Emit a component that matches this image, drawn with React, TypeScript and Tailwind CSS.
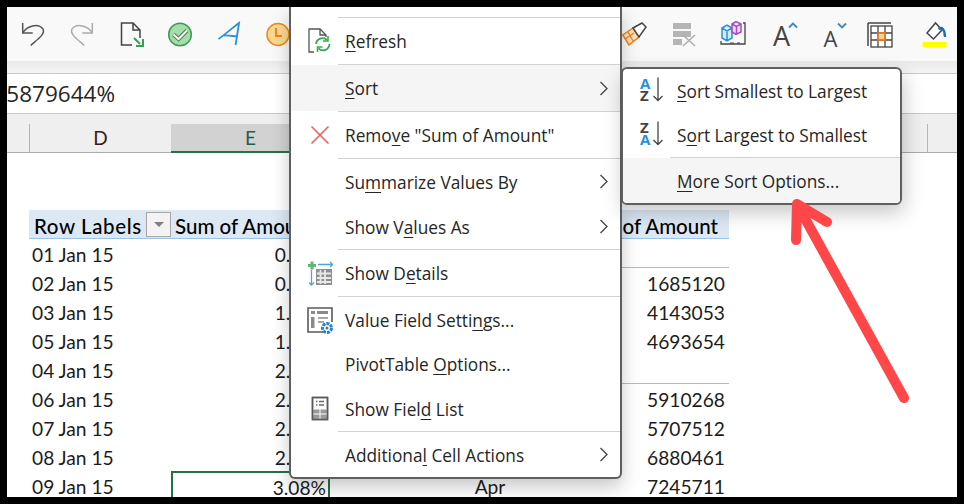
import type { ReactNode } from 'react';

const MENU_FONT = 'font-["Open_Sans","Noto_Sans",sans-serif]';

type PivotRow = { label: string; share: string; month?: string; amount?: string; subtotal?: boolean };

const PIVOT_ROWS: PivotRow[] = [
  { label: '01 Jan 15', share: '0.77%', subtotal: true },
  { label: '02 Jan 15', share: '0.89%', amount: '1685120' },
  { label: '03 Jan 15', share: '1.22%', amount: '4143053' },
  { label: '05 Jan 15', share: '1.64%', amount: '4693654' },
  { label: '04 Jan 15', share: '2.05%', subtotal: true },
  { label: '06 Jan 15', share: '2.31%', amount: '5910268' },
  { label: '07 Jan 15', share: '2.47%', amount: '5707512' },
  { label: '08 Jan 15', share: '2.86%', amount: '6880461' },
  { label: '09 Jan 15', share: '3.08%', month: 'Apr', amount: '7245711' },
];

function Slot({ children }: { children: ReactNode }) {
  return <div className="flex h-[54px] w-[49px] shrink-0 items-center justify-center">{children}</div>;
}

function Icon({ children, size = 30 }: { children: ReactNode; size?: number }) {
  return (
    <svg width={size} height={size} viewBox={`0 0 ${size} ${size}`} fill="none" className="block">
      {children}
    </svg>
  );
}

function UndoIcon() {
  return (
    <Icon>
      <path d="M4.700 4v10h10" stroke="#555" strokeWidth="1.500" />
      <path d="M4.700 13.800C9 7 20 3.500 25 10c2.500 5-5 10-12.300 16.500" stroke="#555" strokeWidth="1.500" />
    </Icon>
  );
}

function RedoIcon() {
  return (
    <Icon>
      <path d="M25.300 4v10h-10" stroke="#ababab" strokeWidth="1.500" />
      <path d="M25.300 13.800C21 7 10 3.500 5 10c-2.500 5 5 10 12.300 16.500" stroke="#ababab" strokeWidth="1.500" />
    </Icon>
  );
}

function ExportDocIcon() {
  return (
    <Icon>
      <path d="M16 26H5.500V4H17l7 7v8M17 4v7h7" stroke="#444" strokeWidth="1.500" />
      <path d="M18 19l6 6" stroke="#2ea44f" strokeWidth="2" />
      <path d="M27 20v7h-7" stroke="#2ea44f" strokeWidth="2" />
    </Icon>
  );
}

function CheckCircleIcon() {
  return (
    <Icon>
      <circle cx="15" cy="15.500" r="11.300" fill="#a4dcaa" stroke="#3f9c50" strokeWidth="1.500" />
      <path d="M8.500 15.500l5 4.500 8.500-8.500" stroke="#3d7f4c" strokeWidth="4" />
      <path d="M8.500 15.500l5 4.500 8.500-8.500" stroke="#fff" strokeWidth="2" />
    </Icon>
  );
}

function ScriptAIcon() {
  return (
    <Icon>
      <path d="M4.500 20C12 15 18 9 25 4c-1 7-2 14-3.500 22M10 16.500c3-.5 8 .5 13 1" stroke="#2b90d9" strokeWidth="1.800" />
    </Icon>
  );
}

function ClockIcon() {
  return (
    <Icon>
      <circle cx="15" cy="15.500" r="11" fill="#fbd88f" stroke="#e98a1c" strokeWidth="1.500" />
      <path d="M13 9v8h6" stroke="#e98a1c" strokeWidth="2" />
    </Icon>
  );
}

function BrushIcon() {
  return (
    <Icon>
      <path d="M2.700 16L13 9l6 9-10 8z" fill="#fde0ba" stroke="#e8811a" strokeWidth="1.500" />
      <path d="M8 13l5 9M5 20l9-6" stroke="#e8811a" strokeWidth="1.200" />
      <path d="M13 9l9-5 4 4-7 10z" fill="#fff" stroke="#444" strokeWidth="1.500" />
    </Icon>
  );
}

function RemoveRowsIcon() {
  return (
    <Icon>
      <rect x="4" y="4" width="18" height="6" fill="#b5b5b5" />
      <rect x="4" y="12" width="18" height="6" fill="#b5b5b5" />
      <rect x="4" y="20" width="9" height="6" fill="#b5b5b5" />
      <path d="M14 16l12 11M26 16L14 27" stroke="#adadad" strokeWidth="1.500" />
    </Icon>
  );
}

function CubesIcon() {
  return (
    <Icon>
      <path d="M25 4h2v21H3v-3" stroke="#444" strokeWidth="1.300" />
      <path d="M4 9l5-3 5 3v10l-5 3-5-3zM4 9l5 3 5-3M9 12v10" fill="#d7ecfa" stroke="#2b90d9" strokeWidth="1.500" />
      <path d="M14 5l4-2.500L23 5v8l-5 2.500-4-2.500zM14 5l4.500 2.500L23 5M18.500 7.500v8" fill="#efd8f3" stroke="#a94bc0" strokeWidth="1.500" />
      <path d="M12 24h4M19 24h3" stroke="#444" strokeWidth="1" />
    </Icon>
  );
}

function FontSizeButton({ large }: { large: boolean }) {
  return (
    <div className="relative flex h-[30px] w-[30px] items-end justify-center">
      <span className={`font-['Open_Sans',sans-serif] leading-none text-[#444] ${large ? 'text-[27px]' : 'text-[22px]'}`}>A</span>
      <svg width="10" height="7" viewBox="0 0 10 7" fill="none" className="absolute -right-[1px] top-[3px]">
        <path d={large ? 'M1 5.500l4-4 4 4' : 'M1 1.500l4 4 4-4'} stroke="#3d87c4" strokeWidth="1.800" />
      </svg>
    </div>
  );
}

function CellGridIcon() {
  return (
    <Icon>
      <path d="M3 4h23M3 4v23" stroke="#444" strokeWidth="1.500" />
      <rect x="6" y="7" width="21" height="21" fill="#fff" stroke="#444" strokeWidth="1.300" />
      <path d="M13 7v21M20 7v21M6 14h21M6 21h21" stroke="#444" strokeWidth="1.300" />
      <rect x="13" y="14" width="7" height="7" fill="#fbd49b" stroke="#e8791a" strokeWidth="1.800" />
    </Icon>
  );
}

function FillColorIcon() {
  return (
    <Icon>
      <path d="M9 14l8.500-10 6.500 7-8.500 9z" fill="#fff" stroke="#444" strokeWidth="1.500" />
      <path d="M20.500 10c3-2 6-1 6.500 8" stroke="#1f6fb5" strokeWidth="2.500" />
      <rect x="4.500" y="23" width="24" height="5" fill="#ffff00" />
    </Icon>
  );
}

function RefreshDocIcon() {
  return (
    <Icon>
      <path d="M9 26H4V3h11l6 6v2M15 3v6h6" stroke="#555" strokeWidth="1.300" />
      <path d="M11 18a6.500 6.500 0 0 1 11-4M24.500 18a6.500 6.500 0 0 1-11 4.500" stroke="#36a84f" strokeWidth="1.800" />
      <path d="M23 10v5h-5M12.500 26v-5h5" stroke="#36a84f" strokeWidth="1.500" />
    </Icon>
  );
}

function RemoveIcon() {
  return (
    <Icon>
      <path d="M6.500 6.500l17 17M23.500 6.500l-17 17" stroke="#e8605f" strokeWidth="1.600" />
    </Icon>
  );
}

function ShowDetailsIcon() {
  return (
    <Icon>
      <path d="M3 7.500h8M7 3.500v8" stroke="#63b27e" strokeWidth="3" />
      <path d="M13 6.500h14M25 4l2.500 2.500L25 9" stroke="#4fa3dc" strokeWidth="1.300" />
      <path d="M6.500 12v15M4 24.500L6.500 27 9 24.500" stroke="#4fa3dc" strokeWidth="1.300" />
      <rect x="11" y="11" width="16" height="16" fill="#8e8e8e" />
      <path d="M12 15.500h14M12 20h14M12 24h14M15.500 12v14M20 12v14" stroke="#e8e8e8" strokeWidth="1.800" />
    </Icon>
  );
}

function ValueSettingsIcon() {
  return (
    <Icon>
      <path d="M20 27H3V3h24v14" stroke="#5a5a5a" strokeWidth="1.600" />
      <rect x="6" y="6" width="4" height="3" fill="#8a8a8a" />
      <rect x="12" y="6" width="11" height="3" fill="#8a8a8a" />
      <rect x="6" y="12" width="3.500" height="11" fill="#8a8a8a" />
      <path d="M13 13h10M13 17h6" stroke="#8a8a8a" strokeWidth="1.500" />
      <circle cx="22" cy="23" r="4.500" fill="#fff" stroke="#2b7fc4" strokeWidth="3" strokeDasharray="3 1" />
      <circle cx="22" cy="23" r="1.500" fill="#2b7fc4" />
    </Icon>
  );
}

function FieldListIcon() {
  return (
    <Icon>
      <rect x="7.500" y="3.500" width="15" height="22" fill="#fff" stroke="#5a5a5a" strokeWidth="1.500" />
      <path d="M11 7.500h1.500M14 7.500h5M11 11h1.500M14 11h5" stroke="#6a6a6a" strokeWidth="1.300" />
      <rect x="8" y="15" width="14" height="10" fill="#9a9a9a" />
      <path d="M8 15h14M8 20h14M15 15v10" stroke="#fff" strokeWidth="1" />
      <rect x="7.500" y="3.500" width="15" height="22" stroke="#5a5a5a" strokeWidth="1.500" />
    </Icon>
  );
}

function SortIcon({ ascending }: { ascending: boolean }) {
  const top = ascending ? 'A' : 'Z';
  const bottom = ascending ? 'Z' : 'A';
  return (
    <Icon size={38}>
      <text x="8" y="16.500" fontFamily="Open Sans, sans-serif" fontWeight="700" fontSize="15" fill={ascending ? '#2b90d9' : '#444'}>
        {top}
      </text>
      <text x="8" y="29" fontFamily="Open Sans, sans-serif" fontWeight="700" fontSize="15" fill={ascending ? '#444' : '#2b90d9'}>
        {bottom}
      </text>
      <path d="M26 5.500v23M21.500 24l4.500 4.500 4.500-4.500" stroke="#444" strokeWidth="1.300" />
    </Icon>
  );
}

function Chevron() {
  return (
    <svg width="10" height="15" viewBox="0 0 10 15" fill="none" className="block">
      <path d="M1.500 1l6.500 6.500-6.500 6.500" stroke="#444" strokeWidth="1.300" />
    </svg>
  );
}

function Mnemonic({ children }: { children: ReactNode }) {
  return <u className="underline decoration-1 underline-offset-[3px]">{children}</u>;
}

function Separator({ inset = 47 }: { inset?: number }) {
  return <div className="h-px shrink-0 bg-[#d2d2d2]" style={{ marginLeft: inset }} />;
}

type MenuRowProps = {
  icon?: ReactNode;
  children: ReactNode;
  height: string;
  submenu?: boolean;
  active?: boolean;
  iconInset?: string;
};

function MenuRow({ icon, children, height, submenu, active, iconInset = 'pl-[11px]' }: MenuRowProps) {
  return (
    <div className={`flex shrink-0 items-center ${height} ${active ? 'bg-[#f5f5f5]' : ''}`}>
      <div className={`flex w-[47px] shrink-0 items-center justify-center ${iconInset}`}>{icon}</div>
      <div className="flex-1 whitespace-nowrap pl-[7px] pt-[2px] text-[17.300px] text-[#262626]">{children}</div>
      {submenu && (
        <div className="pr-[11px]">
          <Chevron />
        </div>
      )}
    </div>
  );
}

function Toolbar() {
  return (
    <div className="flex h-[54px] shrink-0 justify-between bg-[#f9f9f9] pl-[1.500px]">
      <div className="flex">
        <Slot><UndoIcon /></Slot>
        <Slot><RedoIcon /></Slot>
        <Slot><ExportDocIcon /></Slot>
        <Slot><CheckCircleIcon /></Slot>
        <Slot><ScriptAIcon /></Slot>
        <Slot><ClockIcon /></Slot>
      </div>
      <div className="flex">
        <Slot><BrushIcon /></Slot>
        <Slot><RemoveRowsIcon /></Slot>
        <Slot><CubesIcon /></Slot>
        <Slot><FontSizeButton large /></Slot>
        <Slot><FontSizeButton large={false} /></Slot>
        <Slot><CellGridIcon /></Slot>
        <div className="ml-[4px]">
          <Slot><FillColorIcon /></Slot>
        </div>
      </div>
    </div>
  );
}

function ColumnHeaders() {
  return (
    <div className="shrink-0 border-b border-[#ababab] bg-[#efefef] pt-[10px]">
      <div className="flex h-[28px] font-['Lato',sans-serif] text-[19px]">
        <div className="w-[22px] shrink-0" />
        <div className="flex w-[142px] shrink-0 items-center justify-center border-l border-[#b5b5b5] text-[#3a1a1a]">D</div>
        <div className="relative flex w-[159px] shrink-0 items-center justify-center bg-[#d2d2d2] text-[#1f5f4a]">
          E
          <div className="absolute inset-x-0 -bottom-px h-[2px] bg-[#217346]" />
        </div>
        <div className="flex-1" />
        <div className="w-[30px] shrink-0 border-l border-[#b5b5b5]" />
      </div>
    </div>
  );
}

function PivotTable() {
  return (
    <div className="ml-[22px] w-[700px] font-['Lato',sans-serif] text-[19.200px] text-[#1c1c1c]">
      <div className="flex h-[29px] items-center border-b border-[#9bc2e6] bg-[#dce9f5] pt-[4px] text-[20.500px] font-medium text-black">
        <div className="flex w-[142px] shrink-0 items-center justify-between pl-[5px]">
          <span className="whitespace-nowrap tracking-[0.6px]">Row Labels</span>
          <span className="-mt-[4px] flex h-[25px] w-[25px] shrink-0 items-center justify-center border border-[#a6a6a6] bg-[#f3f3f3]">
            <span className="h-0 w-0 border-x-[5px] border-t-[5px] border-x-transparent border-t-[#7f7f7f]" />
          </span>
        </div>
        <div className="w-[159px] shrink-0 whitespace-nowrap pl-[4px]">Sum of Amount</div>
        <div className="flex flex-1 justify-end whitespace-nowrap pr-[11px]">Sum of Amount</div>
      </div>
      {PIVOT_ROWS.map((row) => (
        <div key={row.label} className="flex h-[29px] items-center">
          <div className="w-[142px] shrink-0 pl-[3px] pt-[4px]">{row.label}</div>
          <div
            className={`flex h-full w-[159px] shrink-0 items-center justify-end pr-[2px] pt-[4px] ${
              row.month ? 'border-2 border-b-0 border-[#217346]' : ''
            }`}
          >
            {row.share}
          </div>
          <div className={`flex h-full w-[300px] shrink-0 items-center justify-center pl-[20px] pt-[4px] ${row.subtotal ? 'border-b border-[#9bc2e6]' : ''}`}>
            {row.month}
          </div>
          <div className={`flex h-full flex-1 items-center justify-end pr-[4px] pt-[4px] ${row.subtotal ? 'border-b border-[#9bc2e6]' : ''}`}>
            {row.amount}
          </div>
        </div>
      ))}
    </div>
  );
}

function ContextMenu() {
  return (
    <div
      className={`absolute left-[282px] top-0 flex w-[333px] flex-col rounded-b-md border-x-2 border-b-2 border-[#5f5f5f] bg-white shadow-[0_8px_18px_rgba(0,0,0,0.22)] ${MENU_FONT}`}
    >
      <div className="h-[10px] shrink-0" />
      <Separator />
      <MenuRow height="h-[46px]" icon={<RefreshDocIcon />}><Mnemonic>R</Mnemonic>efresh</MenuRow>
      <Separator />
      <MenuRow height="h-[46px]" submenu active><Mnemonic>S</Mnemonic>ort</MenuRow>
      <Separator />
      <MenuRow height="h-[46px]" icon={<RemoveIcon />}>Remo<Mnemonic>v</Mnemonic>e "Sum of Amount"</MenuRow>
      <Separator />
      <MenuRow height="h-[45px]" submenu>Su<Mnemonic>m</Mnemonic>marize Values By</MenuRow>
      <MenuRow height="h-[45px]" submenu>Show V<Mnemonic>a</Mnemonic>lues As</MenuRow>
      <Separator />
      <MenuRow height="h-[46px]" icon={<ShowDetailsIcon />}>Show D<Mnemonic>e</Mnemonic>tails</MenuRow>
      <Separator />
      <MenuRow height="h-[45px]" icon={<ValueSettingsIcon />}>Value Field Setti<Mnemonic>n</Mnemonic>gs...</MenuRow>
      <MenuRow height="h-[44px]">PivotTable <Mnemonic>O</Mnemonic>ptions...</MenuRow>
      <MenuRow height="h-[45px]" icon={<FieldListIcon />}>Show Fiel<Mnemonic>d</Mnemonic> List</MenuRow>
      <Separator />
      <MenuRow height="h-[45px]" submenu>Additiona<Mnemonic>l</Mnemonic> Cell Actions</MenuRow>
    </div>
  );
}

function SortSubmenu() {
  return (
    <div
      className={`absolute left-[614px] top-[60px] flex w-[281px] flex-col overflow-hidden rounded-md border-2 border-[#5f5f5f] bg-white shadow-[2px_8px_20px_rgba(0,0,0,0.22)] ${MENU_FONT}`}
    >
      <MenuRow height="h-[43px]" iconInset="pl-[9px]" icon={<SortIcon ascending />}><Mnemonic>S</Mnemonic>ort Smallest to Largest</MenuRow>
      <MenuRow height="h-[45px]" iconInset="pl-[9px]" icon={<SortIcon ascending={false} />}>S<Mnemonic>o</Mnemonic>rt Largest to Smallest</MenuRow>
      <Separator />
      <MenuRow height="h-[45px]" active><Mnemonic>M</Mnemonic>ore Sort Options...</MenuRow>
    </div>
  );
}

function PointerArrow() {
  return (
    <svg width="130" height="215" viewBox="0 0 130 215" fill="none" className="absolute left-[782px] top-[188px]">
      <path d="M8 9L115 203M8 9l-1 36M8 9l30 18" stroke="#ff474a" strokeWidth="10" strokeLinecap="round" strokeLinejoin="round" />
    </svg>
  );
}

export default function App() {
  return (
    <div className="h-[504px] w-[964px] overflow-hidden bg-black p-[7px]">
      <div className="relative flex h-[490px] w-[950px] flex-col overflow-hidden bg-white">
        <Toolbar />
        <div className="h-[12px] shrink-0 bg-gradient-to-b from-[#e9e9e9] to-[#f5f5f5]" />
        <div className="flex h-[41px] shrink-0 items-center border-y border-[#c8c8c8] bg-white">
          <div className={`flex w-[108px] justify-end overflow-hidden whitespace-nowrap text-[22.500px] text-[#262626] ${MENU_FONT}`}>
            3.0815879644%
          </div>
        </div>
        <ColumnHeaders />
        <div className="pt-[57px]">
          <PivotTable />
        </div>
        <ContextMenu />
        <SortSubmenu />
        <PointerArrow />
      </div>
    </div>
  );
}
